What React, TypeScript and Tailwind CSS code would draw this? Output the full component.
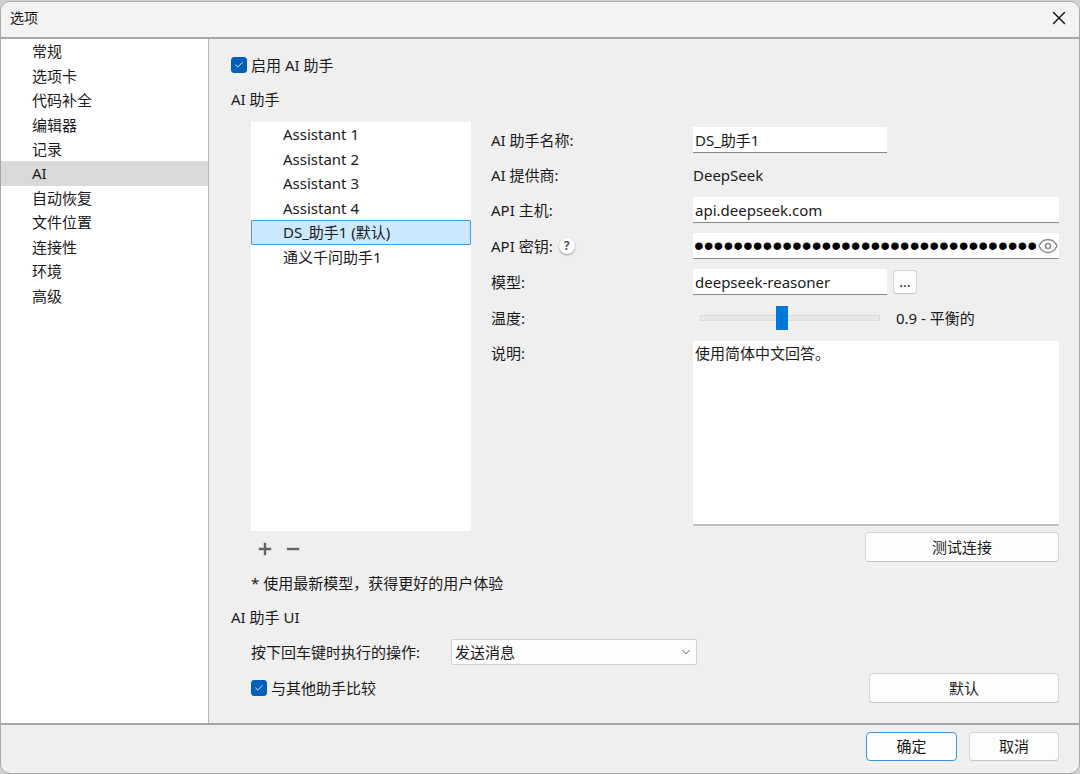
import { useState } from "react";
import { Check, ChevronDown, X } from "lucide-react";

const sections = ["常规", "选项卡", "代码补全", "编辑器", "记录", "AI", "自动恢复", "文件位置", "连接性", "环境", "高级"];

const assistants = ["Assistant 1", "Assistant 2", "Assistant 3", "Assistant 4", "DS_助手1 (默认)", "通义千问助手1"];

const field =
  "h-[26px] border-b border-[#868686] bg-white px-[2px] outline-none rounded-none";
const pushButton = "rounded-[4px] border border-[#d3d3d3] border-b-[#c4c4c4] bg-[#fdfdfd]";

function CheckField({ id, label, defaultChecked }: { id: string; label: string; defaultChecked?: boolean }) {
  return (
    <div className="flex h-5 items-center gap-1">
      <span className="relative flex h-4 w-4">
        <input
          id={id}
          type="checkbox"
          defaultChecked={defaultChecked}
          className="peer h-4 w-4 appearance-none rounded-[3px] border border-[#868686] bg-white checked:border-[#005fb8] checked:bg-[#005fb8]"
        />
        <Check
          className="pointer-events-none absolute inset-0 m-auto hidden h-[10px] w-[10px] text-white peer-checked:block"
          strokeWidth={2}
        />
      </span>
      <label htmlFor={id}>{label}</label>
    </div>
  );
}

export default function App() {
  const [section, setSection] = useState("AI");
  const [assistant, setAssistant] = useState(4);
  const [showKey, setShowKey] = useState(false);
  const [temperature, setTemperature] = useState(0.9);

  return (
    <div className="flex min-h-screen bg-[#d0d0d0] pt-px font-['Noto_Sans','Noto_Sans_CJK_SC',sans-serif] text-[15px] leading-5 text-[#1a1a1a]">
      <div className="flex min-w-0 flex-1 flex-col overflow-hidden rounded-[10px] border border-[#a8a8a8] bg-[#efefef]">
        {/* Title bar */}
        <header className="flex h-[37px] items-center justify-between border-b-2 border-[#a6a6a6] bg-[#f3f3f3] pr-3 pb-1 pl-[9px]">
          <h1 className="text-sm">选项</h1>
          <button type="button" aria-label="关闭" className="flex h-4 w-4 items-center justify-center">
            <X className="h-[22px] w-[22px] shrink-0" strokeWidth={1.6} />
          </button>
        </header>

        <div className="flex flex-1">
          {/* Sections */}
          <nav className="w-[208px] shrink-0 border-r border-[#b4b4b4] bg-white">
            <ul className="grid h-[269px] auto-rows-fr">
              {sections.map((name) => (
                <li key={name} className="flex">
                  <button
                    type="button"
                    onClick={() => setSection(name)}
                    className={`flex flex-1 items-center pl-[31px] text-left ${section === name ? "bg-[#d9d9d9]" : ""}`}
                  >
                    {name}
                  </button>
                </li>
              ))}
            </ul>
          </nav>

          <main className="flex min-w-0 flex-1 flex-col pt-4 pr-5 pb-5 pl-[22px]">
            <CheckField id="enable" label="启用 AI 助手" defaultChecked />
            <h2 className="mt-[14px]">AI 助手</h2>

            <div className="mt-[13px] flex flex-1 gap-5 pl-5">
              {/* Assistant list */}
              <div className="flex w-[220px] shrink-0 flex-col">
                <div className="flex-1 bg-white">
                  <ul className="grid h-[147px] auto-rows-fr">
                    {assistants.map((name, i) => (
                      <li key={name} className="flex">
                        <button
                          type="button"
                          onClick={() => setAssistant(i)}
                          className={`flex flex-1 items-center border pl-[31px] text-left ${
                            assistant === i ? "rounded-[1px] border-[#3c9be6] bg-[#cce8ff]" : "border-transparent"
                          }`}
                        >
                          {name}
                        </button>
                      </li>
                    ))}
                  </ul>
                </div>
                <div className="flex h-[31px] items-center gap-3 pt-1 pl-[6px] text-[#636363]">
                  <button type="button" aria-label="添加">
                    <svg viewBox="0 0 16 16" className="h-4 w-4" fill="currentColor">
                      <path d="M6.800 1.800h2.400v5h5v2.400h-5v5H6.800v-5h-5V6.800h5z" />
                    </svg>
                  </button>
                  <button type="button" aria-label="删除">
                    <svg viewBox="0 0 16 16" className="h-4 w-4" fill="currentColor">
                      <path d="M1.800 6.800h12.400v2.400H1.800z" />
                    </svg>
                  </button>
                </div>
              </div>

              {/* Assistant settings */}
              <div className="flex min-w-0 flex-1 flex-col gap-[10px] pt-[5px]">
                <div className="flex h-[26px] items-center">
                  <label htmlFor="name" className="w-[202px] shrink-0">AI 助手名称:</label>
                  <input id="name" defaultValue="DS_助手1" className={`${field} w-[194px]`} />
                </div>
                <div className="flex h-6 items-center">
                  <span className="w-[202px] shrink-0">AI 提供商:</span>
                  <span>DeepSeek</span>
                </div>
                <div className="flex h-[26px] items-center">
                  <label htmlFor="host" className="w-[202px] shrink-0">API 主机:</label>
                  <input id="host" defaultValue="api.deepseek.com" className={`${field} min-w-0 flex-1`} />
                </div>
                <div className="flex h-[26px] items-center">
                  <div className="flex w-[202px] shrink-0 items-center gap-[6px]">
                    <label htmlFor="key">API 密钥:</label>
                    <button
                      type="button"
                      className="h-4 w-4 rounded-full bg-white text-xs leading-4 font-semibold text-[#404040] shadow-[0_1px_2px_rgba(0,0,0,0.4)]"
                    >
                      ?
                    </button>
                  </div>
                  <div className="flex min-w-0 flex-1 items-center border-b border-[#868686] bg-white">
                    <input
                      id="key"
                      type={showKey ? "text" : "password"}
                      defaultValue="sk-00000000000000000000000000000000"
                      className={`h-[25px] min-w-0 flex-1 bg-white pl-px text-black outline-none ${
                        showKey ? "" : "font-['Liberation_Sans',sans-serif] text-[28px]"
                      }`}
                    />
                    <button
                      type="button"
                      aria-label="显示密钥"
                      onClick={() => setShowKey(!showKey)}
                      className="shrink-0 pr-px"
                    >
                      <svg viewBox="0 0 20 16" className="h-4 w-5" fill="none" stroke="#8c8c8c">
                        <path d="M1 8C3 3.500 6 1.500 10 1.500S17 3.500 19 8C17 12.500 14 14.500 10 14.500S3 12.500 1 8z" strokeWidth="1.300" />
                        <circle cx="10" cy="8" r="2.500" strokeWidth="1.600" />
                      </svg>
                    </button>
                  </div>
                </div>
                <div className="flex h-[26px] items-center">
                  <label htmlFor="model" className="w-[202px] shrink-0">模型:</label>
                  <input id="model" defaultValue="deepseek-reasoner" className={`${field} w-[194px]`} />
                  <button type="button" className={`${pushButton} ml-[6px] h-6 w-6 text-sm`}>...</button>
                </div>
                <div className="flex h-[26px] items-center">
                  <label htmlFor="temperature" className="w-[202px] shrink-0">温度:</label>
                  <input
                    id="temperature"
                    type="range"
                    min={0}
                    max={2}
                    step={0.1}
                    value={temperature}
                    onChange={(e) => setTemperature(Number(e.target.value))}
                    className="mr-4 ml-[7px] h-6 w-[180px] appearance-none bg-transparent [&::-webkit-slider-runnable-track]:h-[6px] [&::-webkit-slider-runnable-track]:border [&::-webkit-slider-runnable-track]:border-[#dadada] [&::-webkit-slider-runnable-track]:bg-[#e6e9e9] [&::-webkit-slider-thumb]:-mt-[10px] [&::-webkit-slider-thumb]:h-6 [&::-webkit-slider-thumb]:w-3 [&::-webkit-slider-thumb]:appearance-none [&::-webkit-slider-thumb]:bg-[#0078d7]"
                  />
                  <output htmlFor="temperature">{temperature.toFixed(1)} - 平衡的</output>
                </div>
                <div className="flex flex-1">
                  <label htmlFor="instructions" className="w-[202px] shrink-0 pt-[2px]">说明:</label>
                  <div className="flex min-w-0 flex-1 flex-col items-end gap-[6px]">
                    <textarea
                      id="instructions"
                      defaultValue="使用简体中文回答。"
                      className="min-h-24 w-full flex-1 resize-none border-b-2 border-[#bdbfbd] bg-white px-[2px] pt-[2px] outline-none"
                    />
                    <button type="button" className={`${pushButton} h-[30px] w-[194px]`}>测试连接</button>
                  </div>
                </div>
              </div>
            </div>

            <p className="mt-[11px] pl-5">* 使用最新模型，获得更好的用户体验</p>

            <h2 className="mt-[14px]">AI 助手 UI</h2>
            <div className="mt-3 flex items-center pl-5">
              <label htmlFor="enter-action" className="w-[200px]">按下回车键时执行的操作:</label>
              <div className="relative w-[246px]">
                <select
                  id="enter-action"
                  className="h-[26px] w-full appearance-none rounded-[2px] border border-[#d0d0d0] bg-[#fdfdfd] pl-[3px] outline-none"
                >
                  <option>发送消息</option>
                </select>
                <ChevronDown
                  className="pointer-events-none absolute top-[6px] right-1 h-[14px] w-[14px] text-[#777]"
                  strokeWidth={1.8}
                />
              </div>
            </div>
            <div className="mt-2 flex h-[30px] items-center justify-between pl-5">
              <CheckField id="compare" label="与其他助手比较" defaultChecked />
              <button type="button" className={`${pushButton} h-[30px] w-[190px]`}>默认</button>
            </div>
          </main>
        </div>

        <footer className="flex h-[50px] items-center justify-end gap-3 border-t-2 border-[#a6a6a6] pr-5 pb-[6px]">
          <button type="button" className="h-[29px] w-[91px] rounded-[4px] border border-[#3b94dd] bg-[#fdfdfd]">
            确定
          </button>
          <button type="button" className={`${pushButton} h-[29px] w-[90px]`}>取消</button>
        </footer>
      </div>
    </div>
  );
}
